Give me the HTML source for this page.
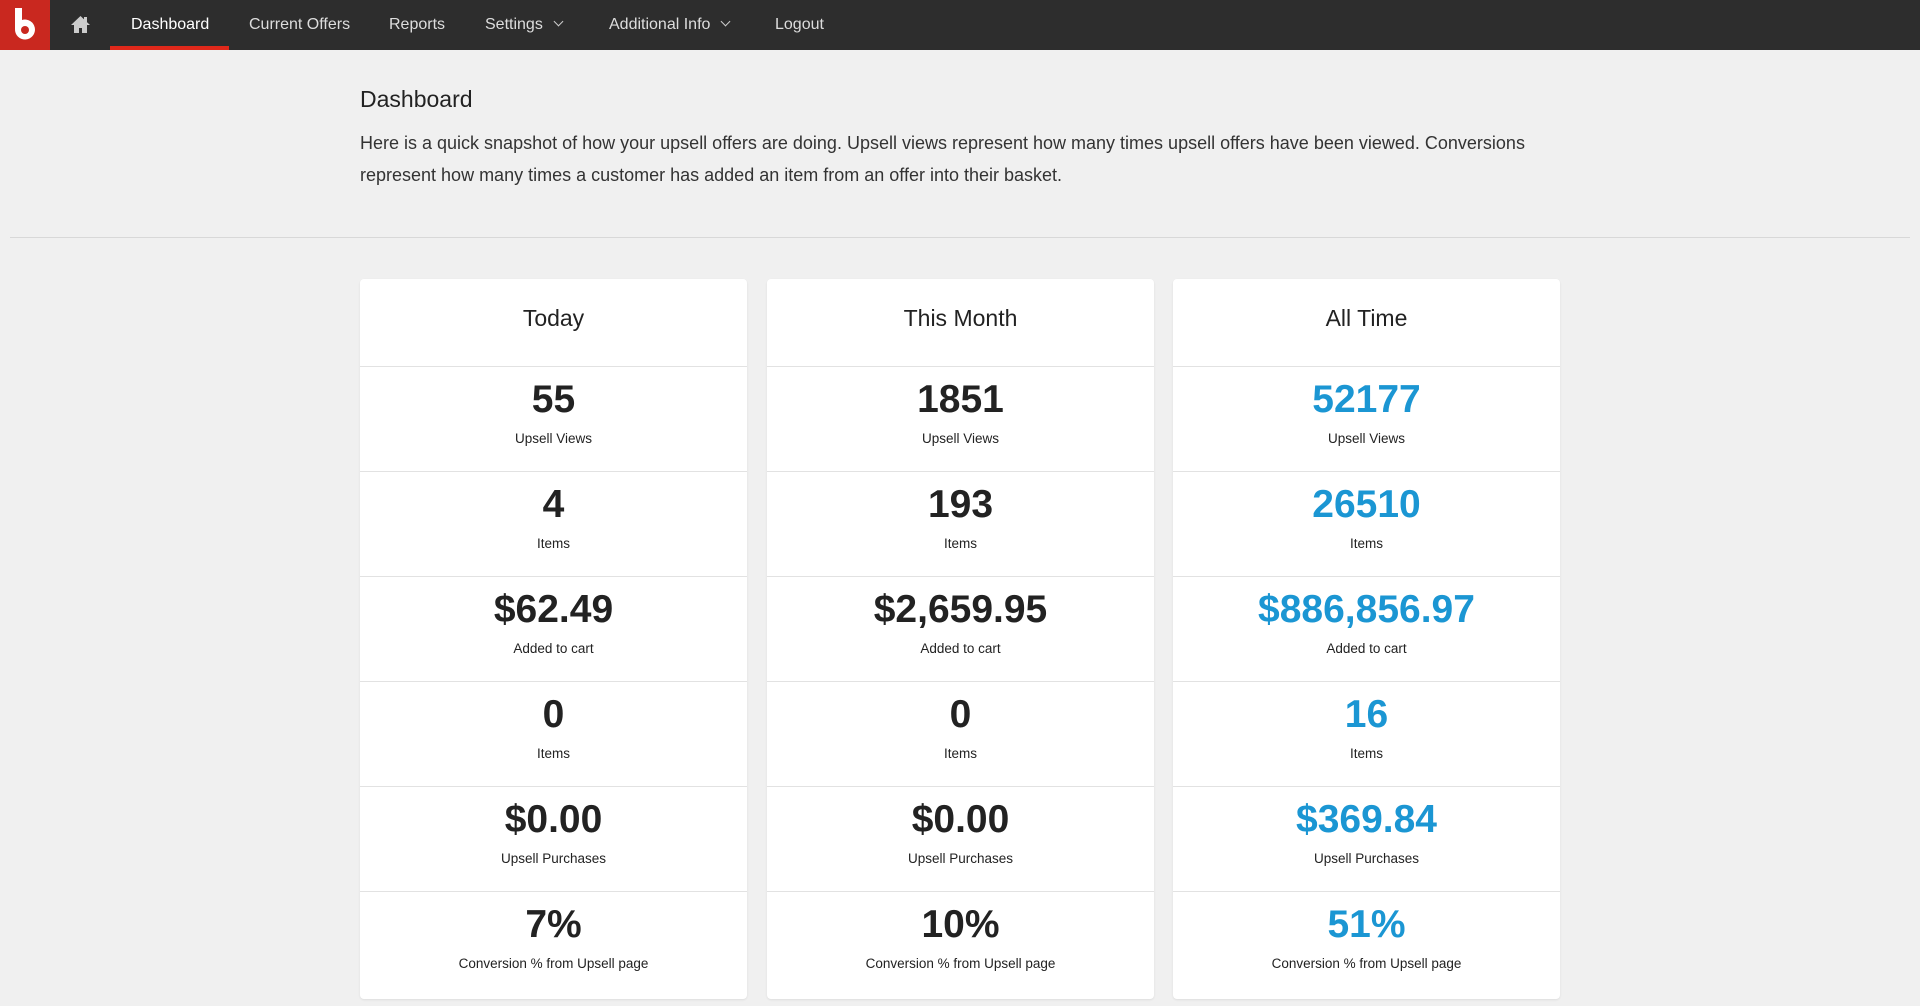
<!DOCTYPE html>
<html><head><meta charset="utf-8"><style>
*{box-sizing:border-box;margin:0;padding:0}
body{width:1920px;height:1006px;overflow:hidden;background:#f0f0f0;font-family:"Liberation Sans",Arial,sans-serif;color:#222}
.nav{height:50px;background:#2d2d2d;position:relative}
.logo{position:absolute;left:0;top:0;width:50px;height:50px;background:#c9281f}
.nav a{position:absolute;top:1px;line-height:48px;color:#ddd;font-size:16px;text-decoration:none;white-space:nowrap}
.nav a.act{color:#fff}
.ul{position:absolute;left:110px;top:46px;width:119px;height:4px;background:#e0281a}
.chev{display:inline-block;width:7px;height:7px;border-right:1.5px solid #ccc;border-bottom:1.5px solid #ccc;transform:rotate(45deg);margin-left:12px;position:relative;top:-4px}
h1{position:absolute;left:360px;top:86px;font-size:23px;font-weight:normal;color:#222}
p.intro{position:absolute;left:360px;top:127px;width:1240px;font-size:18px;line-height:32px;color:#333}
.sep{position:absolute;left:10px;top:237px;width:1900px;height:1px;background:#d8d8d8}
.card{position:absolute;top:279px;width:387px;height:720px;background:#fff;border-radius:4px;box-shadow:0 1px 2px rgba(0,0,0,.08)}
.hd{height:88px;text-align:center;font-size:23px;line-height:78px;font-weight:normal;color:#222;border-bottom:1px solid #e2e2e2}
.row{height:105px;text-align:center;border-bottom:1px solid #e2e2e2;padding-top:11px}
.row:last-child{border-bottom:none}
.num{font-size:39px;font-weight:bold;line-height:44px}
.lbl{font-size:13.5px;margin-top:9px;color:#222}
.blue .num{color:#1b96d3}
</style></head><body>
<div class="nav">
<div class="logo"><svg width="50" height="50" viewBox="0 0 50 50"><path d="M15 8 h7 v12 a10 10 0 1 1 -7 9 Z" fill="#fff"/><circle cx="25" cy="30" r="4" fill="#c9281f"/></svg></div>
<svg style="position:absolute;left:70px;top:15px" width="21" height="19" viewBox="0 0 21 19"><path d="M10.5 1 L1 10 h3 v8 h5 v-5 h3 v5 h5 v-8 h3 Z" fill="#ccc"/><rect x="14" y="2" width="3" height="5" fill="#ccc"/></svg>
<a class="act" style="left:131px">Dashboard</a>
<div class="ul"></div>
<a style="left:249px">Current Offers</a>
<a style="left:389px">Reports</a>
<a style="left:485px">Settings<span class="chev"></span></a>
<a style="left:609px">Additional Info<span class="chev"></span></a>
<a style="left:775px">Logout</a>
</div>
<h1>Dashboard</h1>
<p class="intro">Here is a quick snapshot of how your upsell offers are doing. Upsell views represent how many times upsell offers have been viewed. Conversions represent how many times a customer has added an item from an offer into their basket.</p>
<div class="sep"></div>
<div class="card" style="left:360px"><div class="hd">Today</div>
<div class="row"><div class="num">55</div><div class="lbl">Upsell Views</div></div>
<div class="row"><div class="num">4</div><div class="lbl">Items</div></div>
<div class="row"><div class="num">$62.49</div><div class="lbl">Added to cart</div></div>
<div class="row"><div class="num">0</div><div class="lbl">Items</div></div>
<div class="row"><div class="num">$0.00</div><div class="lbl">Upsell Purchases</div></div>
<div class="row"><div class="num">7%</div><div class="lbl">Conversion % from Upsell page</div></div>
</div>
<div class="card" style="left:767px"><div class="hd">This Month</div>
<div class="row"><div class="num">1851</div><div class="lbl">Upsell Views</div></div>
<div class="row"><div class="num">193</div><div class="lbl">Items</div></div>
<div class="row"><div class="num">$2,659.95</div><div class="lbl">Added to cart</div></div>
<div class="row"><div class="num">0</div><div class="lbl">Items</div></div>
<div class="row"><div class="num">$0.00</div><div class="lbl">Upsell Purchases</div></div>
<div class="row"><div class="num">10%</div><div class="lbl">Conversion % from Upsell page</div></div>
</div>
<div class="card blue" style="left:1173px"><div class="hd">All Time</div>
<div class="row"><div class="num">52177</div><div class="lbl">Upsell Views</div></div>
<div class="row"><div class="num">26510</div><div class="lbl">Items</div></div>
<div class="row"><div class="num">$886,856.97</div><div class="lbl">Added to cart</div></div>
<div class="row"><div class="num">16</div><div class="lbl">Items</div></div>
<div class="row"><div class="num">$369.84</div><div class="lbl">Upsell Purchases</div></div>
<div class="row"><div class="num">51%</div><div class="lbl">Conversion % from Upsell page</div></div>
</div>
</body></html>
